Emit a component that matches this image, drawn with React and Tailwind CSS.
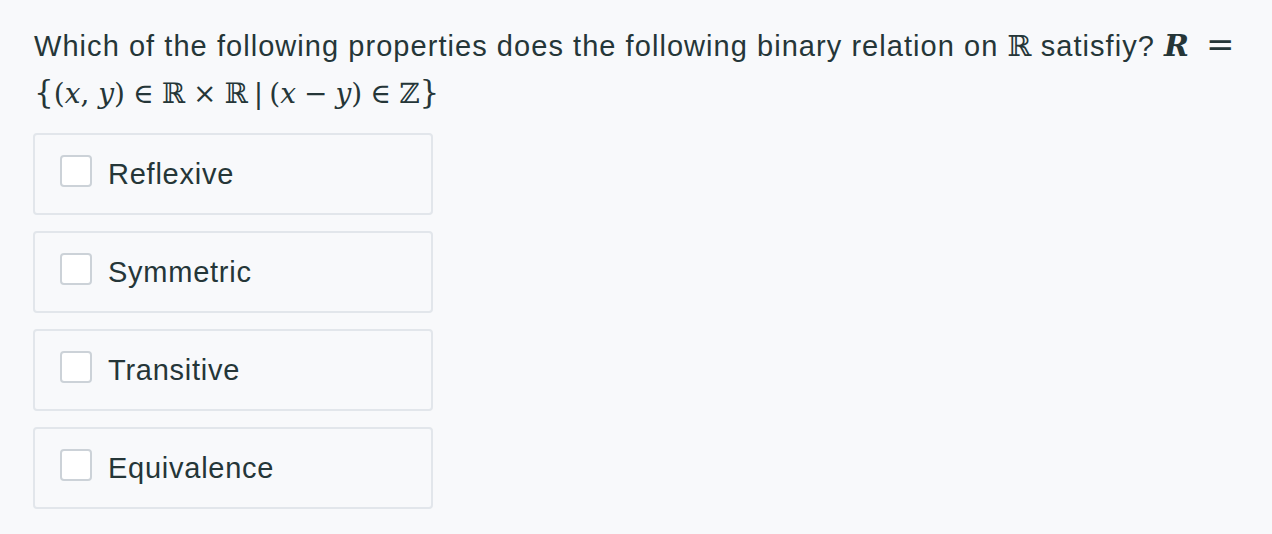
import React from 'react';

const options = ['Reflexive', 'Symmetric', 'Transitive', 'Equivalence'];

const Mi = ({ children, cls = '' }) => (
  <span className={'italic ' + cls} style={{ fontFamily: '"DejaVu Serif", "Liberation Serif", serif' }}>{children}</span>
);

const Mo = ({ children, cls = '' }) => (
  <span className={cls} style={{ fontFamily: '"DejaVu Serif", "Liberation Serif", serif' }}>{children}</span>
);

export default function App() {
  return (
    <div className="min-h-[534px] w-full bg-[#f8f9fb] text-[#253638] font-['Liberation_Sans',sans-serif] pl-[34px] pt-[24px]">
      {/* question */}
      <div className="text-[29px] leading-[40px] whitespace-nowrap tracking-[1.05px]">
        Which of the following properties does the following binary relation on{' '}
        <Mo cls="tracking-normal">ℝ</Mo> satisfiy? <Mi cls="text-[30px] font-bold tracking-normal">R</Mi>{' '}
        <Mo cls="ml-2 text-[34px] tracking-normal">=</Mo>
      </div>
      <div className="text-[28px] leading-[48px] whitespace-nowrap mt-[2px]">
        <Mo cls="text-[31px]">{'{'}</Mo>
        <Mo>(</Mo><Mi>x</Mi><Mo>, </Mo><Mi>y</Mi><Mo>)</Mo>
        <Mo cls="mx-2">∈</Mo><Mo>ℝ</Mo><Mo cls="mx-2">×</Mo><Mo>ℝ</Mo>
        <Mo cls="mx-[6px]">|</Mo>
        <Mo>(</Mo><Mi>x</Mi><Mo cls="mx-2">−</Mo><Mi>y</Mi><Mo>)</Mo>
        <Mo cls="mx-2">∈</Mo><Mo>ℤ</Mo>
        <Mo cls="text-[31px]">{'}'}</Mo>
      </div>

      {/* options */}
      <div className="mt-[15px] flex flex-col gap-[16px] w-[400px] -ml-[1px]">
        {options.map((o) => (
          <label
            key={o}
            className="h-[82px] flex items-center border-2 border-[#e2e6eb] rounded-[4px] bg-[#f8f9fb] pl-[25px] cursor-pointer"
          >
            <span className="w-[32px] h-[32px] border-2 border-[#ccd2d8] rounded-[4px] bg-white shrink-0 -mt-[7px]" />
            <span className="ml-[16px] text-[29px] leading-none tracking-[0.75px]">{o}</span>
          </label>
        ))}
      </div>
    </div>
  );
}
